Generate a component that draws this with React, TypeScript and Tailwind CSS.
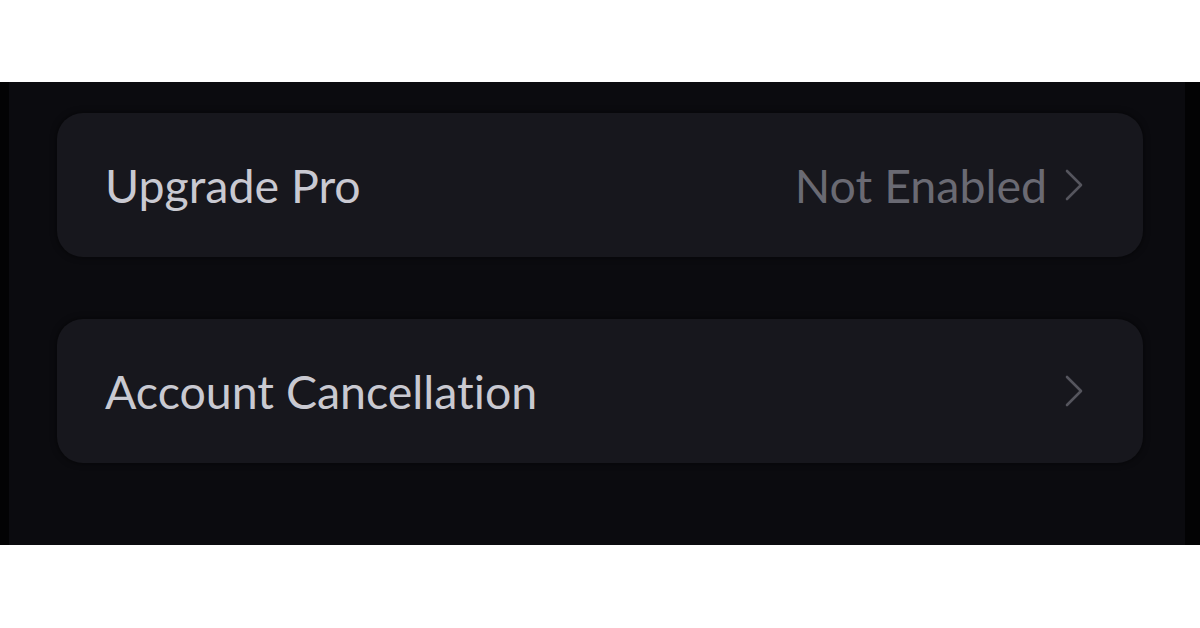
export default function App() {
  const rows = [
    { label: 'Upgrade Pro', value: 'Not Enabled' },
    { label: 'Account Cancellation', value: '' },
  ]

  return (
    <div className="w-[1200px] h-[628px] bg-white flex flex-col" style={{ fontFamily: 'Lato, "Open Sans", sans-serif' }}>
      <div className="h-[82px] shrink-0" />
      <div className="h-[463px] flex shrink-0">
        <div className="w-[9px] bg-[#030304]" />
        <div className="flex-1 bg-[#0b0b0f] pl-[48px] pr-[42px] pt-[31px] flex flex-col gap-[62px]">
          {rows.map((row) => (
            <div
              key={row.label}
              className="h-[144px] rounded-[26px] bg-[#17171d] shadow-[0_0_6px_rgba(0,0,0,0.6)] flex items-center pl-[48px] pr-[58px]"
            >
              <span className="text-[46.5px] leading-none text-[#c9c9d1] [font-variant-ligatures:none]">{row.label}</span>
              <div className="ml-auto flex items-center gap-[16px]">
                {row.value && (
                  <span className="text-[46.5px] leading-none text-[#6a6a73] [font-variant-ligatures:none]">{row.value}</span>
                )}
                <svg width="22" height="34" viewBox="0 0 22 34" fill="none">
                  <path d="M4 3 L18 17 L4 31" stroke="#55555d" strokeWidth="2.6" strokeLinecap="round" strokeLinejoin="round" />
                </svg>
              </div>
            </div>
          ))}
        </div>
        <div className="w-[15px] bg-[#030304]" />
      </div>
      <div className="flex-1" />
    </div>
  )
}
